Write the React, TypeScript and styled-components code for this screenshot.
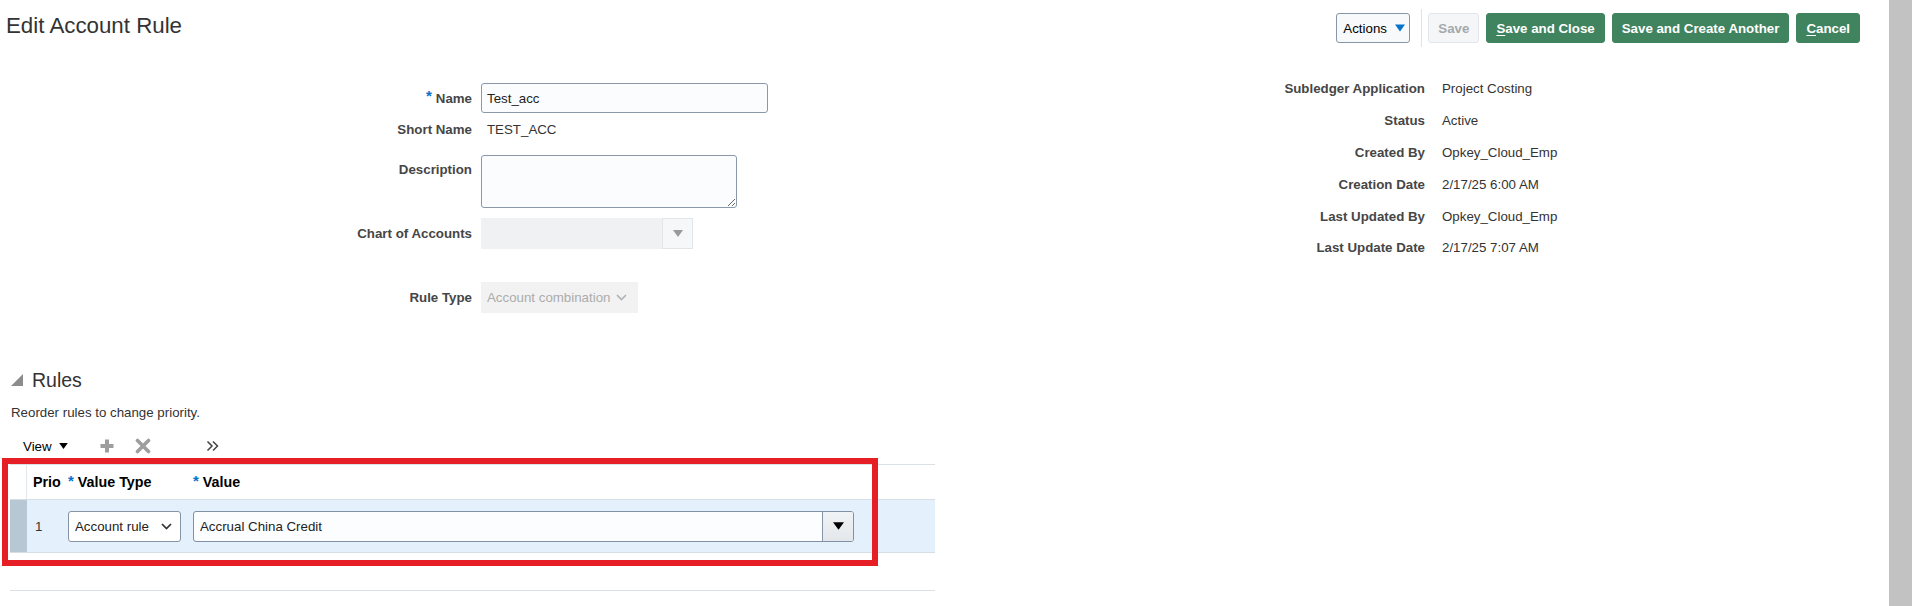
import React from 'react';
import styled, { createGlobalStyle, css } from 'styled-components';

const GlobalStyle = createGlobalStyle`
  html, body { margin: 0; padding: 0; background: #fff; }
  body {
    font-family: "Liberation Sans", Arial, Helvetica, sans-serif;
    font-size: 13.3px;
    color: #333;
  }
  * { box-sizing: border-box; }
`;

const FONT = `"Liberation Sans", Arial, Helvetica, sans-serif`;

const Page = styled.div`
  display: flex;
  width: 1912px;
  height: 606px;
  overflow: hidden;
  background: #fff;
`;

const Main = styled.div`
  flex: 1;
  min-width: 0;
`;

const ScrollTrack = styled.div`
  width: 23px;
  flex: none;
  background: #c2c2c2;
`;

/* ---------- Header ---------- */
const Header = styled.header`
  display: flex;
  align-items: flex-start;
  justify-content: space-between;
  height: 56px;
  padding: 13px 29px 0 6px;
`;

const Title = styled.h1`
  margin: 0;
  font-size: 22.3px;
  line-height: 26px;
  font-weight: normal;
  color: #333;
`;

const ButtonBar = styled.div`
  display: flex;
  align-items: center;
  height: 30px;
`;

const ActionsButton = styled.button`
  display: flex;
  align-items: center;
  gap: 8px;
  height: 30px;
  width: 74px;
  padding: 0 0 0 6px;
  background: #f7f9fb;
  border: 1px solid #8797a8;
  border-radius: 3px;
  font: 13.3px ${FONT};
  color: #000;
`;

const Separator = styled.div`
  width: 1px;
  height: 38px;
  background: #dfe3e7;
  margin: 0 6px 0 11px;
`;

const ToolButton = styled.button<{ $disabled?: boolean; $first?: boolean }>`
  height: 30px;
  padding: 0 9px;
  margin-left: ${p => (p.$first ? 0 : 7)}px;
  border-radius: 3px;
  font: bold 13.3px ${FONT};
  white-space: nowrap;
  ${p =>
    p.$disabled
      ? css`
          background: #f4f6f8;
          border: 1px solid #e2e6ea;
          color: #a5a9ad;
        `
      : css`
          background: #40835f;
          border: 1px solid #40835f;
          color: #fff;
        `}
  u { text-decoration: underline; text-underline-offset: 2px; }
`;

/* ---------- Form ---------- */
const FormSection = styled.div`
  display: flex;
  align-items: flex-start;
  height: 312px;
`;

const LeftForm = styled.div`
  width: 781px;
  flex: none;
`;

const FieldRow = styled.div<{ $gap: number; $start?: boolean }>`
  display: grid;
  grid-template-columns: 472px 300px;
  column-gap: 9px;
  align-items: ${p => (p.$start ? 'start' : 'center')};
  margin-top: ${p => p.$gap}px;
`;

const Label = styled.label<{ $pad?: number }>`
  text-align: right;
  font-weight: bold;
  color: #464646;
  line-height: 20px;
  padding-top: ${p => p.$pad ?? 0}px;
`;

const Req = styled.span`
  color: #0572ce;
  font-weight: bold;
  font-size: 15px;
  margin-right: 4px;
  position: relative;
  top: -2px;
`;

const TextInput = styled.div<{ $w: number }>`
  width: ${p => p.$w}px;
  height: 30px;
  display: flex;
  align-items: center;
  padding-left: 5px;
  border: 1px solid #8999a9;
  border-radius: 3px;
  background: #fbfcfd;
  color: #222;
`;

const ValueText = styled.div`
  padding-left: 6px;
  line-height: 20px;
  color: #333;
`;

const TextArea = styled.textarea`
  width: 256px;
  height: 53px;
  border: 1px solid #8999a9;
  border-radius: 3px;
  background: #fbfcfd;
  resize: both;
  font: 13.3px ${FONT};
  padding: 4px;
  display: block;
`;

const DisabledCombo = styled.div`
  width: 212px;
  height: 31px;
  display: flex;
  background: #f0f1f2;
`;

const DisabledComboField = styled.div`
  flex: 1;
`;

const DisabledComboButton = styled.div`
  width: 31px;
  display: flex;
  align-items: center;
  justify-content: center;
  background: #f6f7f8;
  border: 1px solid #e3e6e9;
`;

const DisabledSelect = styled.div`
  width: 157px;
  height: 31px;
  display: flex;
  align-items: center;
  gap: 6px;
  padding-left: 6px;
  background: #f2f2f2;
  color: #acacac;
  white-space: nowrap;
`;

const InfoGrid = styled.div`
  display: grid;
  grid-template-columns: 200px auto;
  column-gap: 17px;
  grid-auto-rows: 31.8px;
  align-items: center;
  margin-left: 444px;
  padding-top: 17px;
`;

const InfoLabel = styled.div`
  text-align: right;
  font-weight: bold;
  color: #464646;
  white-space: nowrap;
`;

const InfoValue = styled.div`
  color: #333;
  white-space: nowrap;
`;

/* ---------- Rules ---------- */
const RulesSection = styled.section``;

const SectionHeading = styled.h2`
  display: flex;
  align-items: center;
  gap: 9px;
  margin: 0;
  padding-left: 11px;
  height: 24px;
  font-size: 19.5px;
  line-height: 24px;
  font-weight: normal;
  color: #333;
`;

const Hint = styled.p`
  margin: 12px 0 0;
  padding-left: 11px;
  line-height: 18px;
  color: #333;
`;

const TableToolbar = styled.div`
  display: flex;
  align-items: center;
  height: 24px;
  margin-top: 12px;
  padding-left: 23px;
`;

const ViewMenu = styled.div`
  display: flex;
  align-items: center;
  gap: 7px;
  color: #000;
`;

const IconSlot = styled.span<{ $gap: number }>`
  display: inline-flex;
  align-items: center;
  margin-left: ${p => p.$gap}px;
`;

const Table = styled.div`
  position: relative;
  margin: 6px 0 0 10px;
  width: 925px;
  border-top: 1px solid #d9e0e6;
`;

const GridRow = styled.div<{ $header?: boolean }>`
  display: grid;
  grid-template-columns: 17px 35px 126px 1fr;
  height: ${p => (p.$header ? 35 : 53)}px;
  border-bottom: 1px solid #d6dee5;
  background: ${p => (p.$header ? '#fff' : '#e4f0fc')};
`;

const Gutter = styled.div<{ $header?: boolean }>`
  ${p =>
    p.$header
      ? css`
          border-right: 1px solid #e3e8ed;
        `
      : css`
          background: #b8c7d4;
        `}
`;

const HeadCell = styled.div<{ $pad: number }>`
  display: flex;
  align-items: center;
  padding-left: ${p => p.$pad}px;
  font-weight: bold;
  font-size: 14.3px;
  color: #000;
  white-space: nowrap;
`;

const Cell = styled.div<{ $pad: number }>`
  display: flex;
  align-items: center;
  padding-left: ${p => p.$pad}px;
  color: #333;
`;

const SelectBox = styled.div`
  width: 113px;
  height: 31px;
  display: flex;
  align-items: center;
  justify-content: space-between;
  padding: 0 8px 0 6px;
  border: 1px solid #8595a5;
  border-radius: 3px;
  background: #fff;
  color: #222;
  white-space: nowrap;
`;

const ComboBox = styled.div`
  width: 661px;
  height: 31px;
  display: flex;
  border: 1px solid #7f91a3;
  border-radius: 3px;
  background: #fcfdfe;
  overflow: hidden;
`;

const ComboText = styled.div`
  flex: 1;
  display: flex;
  align-items: center;
  padding-left: 6px;
  color: #222;
`;

const ComboButton = styled.div`
  width: 31px;
  display: flex;
  align-items: center;
  justify-content: center;
  border-left: 1px solid #8595a5;
  background: linear-gradient(#f1f3f5, #e3e7eb);
`;

const TableFooterLine = styled.div`
  height: 1px;
  margin-top: 37px;
  background: #d9e0e6;
`;

const Highlight = styled.div`
  position: absolute;
  left: -8px;
  top: -7px;
  width: 876px;
  height: 108px;
  border: 6px solid #e61e25;
  pointer-events: none;
  z-index: 2;
`;

/* ---------- Icons ---------- */
const DownTriangle = ({ color = '#000', w = 9, h = 6 }: { color?: string; w?: number; h?: number }) => (
  <svg width={w} height={h} viewBox="0 0 10 7" aria-hidden>
    <polygon points="0,0 10,0 5,7" fill={color} />
  </svg>
);

const Chevron = ({ color }: { color: string }) => (
  <svg width="11" height="7" viewBox="0 0 11 7" aria-hidden>
    <polyline points="1,1 5.5,5.5 10,1" fill="none" stroke={color} strokeWidth="1.7" />
  </svg>
);

const DisclosureIcon = () => (
  <svg width="12" height="12" viewBox="0 0 12 12" aria-hidden>
    <polygon points="12,0 12,12 0,12" fill="#8c8c8c" />
  </svg>
);

const PlusIcon = () => (
  <svg width="16" height="16" viewBox="0 0 16 16" aria-hidden>
    <path d="M8 1.5V14.5M1.5 8H14.5" stroke="#9e9e9e" strokeWidth="4" />
  </svg>
);

const CrossIcon = () => (
  <svg width="16" height="16" viewBox="0 0 16 16" aria-hidden>
    <path d="M2.5 2.5L13.5 13.5M13.5 2.5L2.5 13.5" stroke="#9e9e9e" strokeWidth="3.6" strokeLinecap="round" />
  </svg>
);

const ChevronsRight = () => (
  <svg width="13" height="12" viewBox="0 0 13 12" aria-hidden>
    <path d="M1.5 1.5L6 6L1.5 10.5M7 1.5L11.5 6L7 10.5" fill="none" stroke="#444" strokeWidth="1.5" />
  </svg>
);

const info: [string, string][] = [
  ['Subledger Application', 'Project Costing'],
  ['Status', 'Active'],
  ['Created By', 'Opkey_Cloud_Emp'],
  ['Creation Date', '2/17/25 6:00 AM'],
  ['Last Updated By', 'Opkey_Cloud_Emp'],
  ['Last Update Date', '2/17/25 7:07 AM'],
];

export default function App() {
  return (
    <>
      <GlobalStyle />
      <Page>
        <Main>
          <Header>
            <Title>Edit Account Rule</Title>
            <ButtonBar>
              <ActionsButton>
                Actions
                <DownTriangle color="#0572ce" w={10} h={8} />
              </ActionsButton>
              <Separator />
              <ToolButton $disabled $first>Save</ToolButton>
              <ToolButton><u>S</u>ave and Close</ToolButton>
              <ToolButton>Save and Create Another</ToolButton>
              <ToolButton><u>C</u>ancel</ToolButton>
            </ButtonBar>
          </Header>

          <FormSection>
            <LeftForm>
              <FieldRow $gap={27}>
                <Label><Req>*</Req>Name</Label>
                <TextInput $w={287}>Test_acc</TextInput>
              </FieldRow>
              <FieldRow $gap={7}>
                <Label>Short Name</Label>
                <ValueText>TEST_ACC</ValueText>
              </FieldRow>
              <FieldRow $gap={15} $start>
                <Label $pad={5}>Description</Label>
                <TextArea readOnly value="" />
              </FieldRow>
              <FieldRow $gap={10}>
                <Label>Chart of Accounts</Label>
                <DisabledCombo>
                  <DisabledComboField />
                  <DisabledComboButton>
                    <DownTriangle color="#9a9a9a" w={10} h={7} />
                  </DisabledComboButton>
                </DisabledCombo>
              </FieldRow>
              <FieldRow $gap={33}>
                <Label>Rule Type</Label>
                <DisabledSelect>
                  Account combination
                  <Chevron color="#b3b3b3" />
                </DisabledSelect>
              </FieldRow>
            </LeftForm>

            <InfoGrid>
              {info.map(([k, v]) => (
                <React.Fragment key={k}>
                  <InfoLabel>{k}</InfoLabel>
                  <InfoValue>{v}</InfoValue>
                </React.Fragment>
              ))}
            </InfoGrid>
          </FormSection>

          <RulesSection>
            <SectionHeading>
              <DisclosureIcon />
              Rules
            </SectionHeading>
            <Hint>Reorder rules to change priority.</Hint>
            <TableToolbar>
              <ViewMenu>
                View
                <DownTriangle />
              </ViewMenu>
              <IconSlot $gap={31}><PlusIcon /></IconSlot>
              <IconSlot $gap={20}><CrossIcon /></IconSlot>
              <IconSlot $gap={55}><ChevronsRight /></IconSlot>
            </TableToolbar>

            <Table>
              <GridRow $header>
                <Gutter $header />
                <HeadCell $pad={6}>Prio</HeadCell>
                <HeadCell $pad={6}><Req>*</Req>Value Type</HeadCell>
                <HeadCell $pad={5}><Req>*</Req>Value</HeadCell>
              </GridRow>
              <GridRow>
                <Gutter />
                <Cell $pad={8}>1</Cell>
                <Cell $pad={6}>
                  <SelectBox>
                    Account rule
                    <Chevron color="#333" />
                  </SelectBox>
                </Cell>
                <Cell $pad={5}>
                  <ComboBox>
                    <ComboText>Accrual China Credit</ComboText>
                    <ComboButton>
                      <DownTriangle w={11} h={8} />
                    </ComboButton>
                  </ComboBox>
                </Cell>
              </GridRow>
              <TableFooterLine />
              <Highlight />
            </Table>
          </RulesSection>
        </Main>
        <ScrollTrack />
      </Page>
    </>
  );
}
